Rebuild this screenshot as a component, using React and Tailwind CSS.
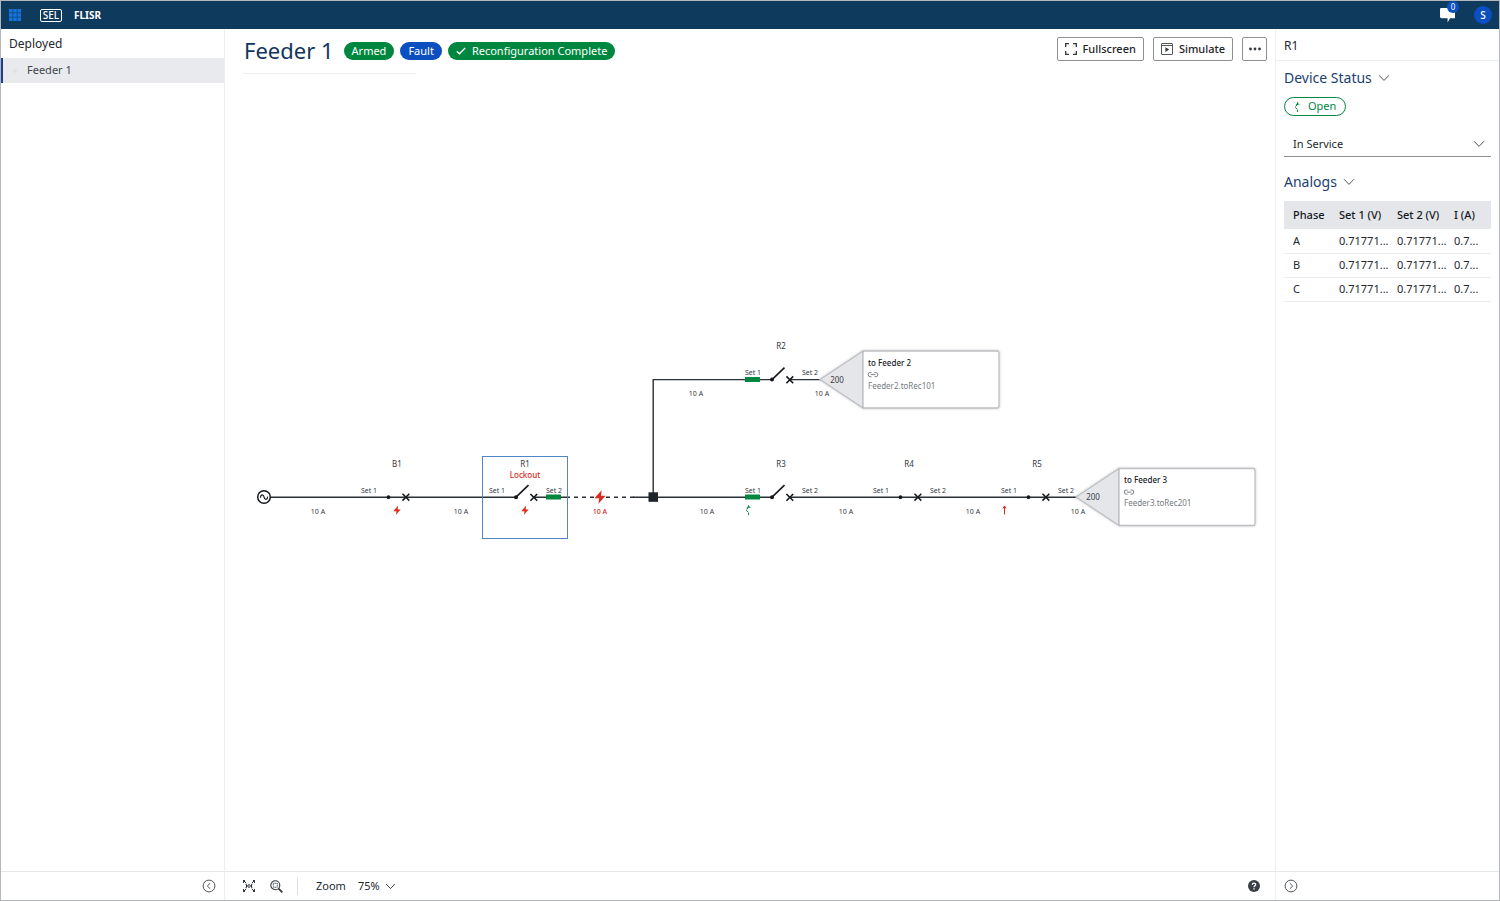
import React from "react";

const AMPS = [
  { x: 318, y: 514 },
  { x: 461, y: 514 },
  { x: 600, y: 514, alert: true },
  { x: 707, y: 514 },
  { x: 846, y: 514 },
  { x: 973, y: 514 },
  { x: 1078, y: 514 },
  { x: 696, y: 396 },
  { x: 822, y: 396 },
];

const SETS = [
  { x: 369, y: 493, n: 1 },
  { x: 497, y: 493, n: 1 },
  { x: 554, y: 493, n: 2 },
  { x: 753, y: 493, n: 1 },
  { x: 810, y: 493, n: 2 },
  { x: 881, y: 493, n: 1 },
  { x: 938, y: 493, n: 2 },
  { x: 1009, y: 493, n: 1 },
  { x: 1066, y: 493, n: 2 },
  { x: 753, y: 375, n: 1 },
  { x: 810, y: 375, n: 2 },
];

const DEVICES = [
  { x: 397, y: 467, name: "B1" },
  { x: 525, y: 467, name: "R1" },
  { x: 781, y: 467, name: "R3" },
  { x: 909, y: 467, name: "R4" },
  { x: 1037, y: 467, name: "R5" },
  { x: 781, y: 349, name: "R2" },
];

function Chevron({ className }) {
  return (
    <svg viewBox="0 0 12 8" className={className} fill="none" stroke="currentColor" aria-hidden="true">
      <path d="M1 1.2 6 6.4 11 1.2" />
    </svg>
  );
}

function Bolt({ x, y, size }) {
  return (
    <path
      transform={`translate(${x} ${y}) scale(${size / 10})`}
      d="M1.3-5.6-4.6 1.1H-.7L-1.3 5.6 4.6-1.1H.9Z"
      fill="#dc2a1c"
    />
  );
}

function Closed({ x, y }) {
  return (
    <g stroke="#15191d" strokeWidth="1.5">
      <circle cx={x} cy={y} r="1.9" fill="#15191d" stroke="none" />
      <path d={`M${x + 14} ${y - 3.4}l6.800 6.800m0-6.800l-6.800 6.800`} />
    </g>
  );
}

function Open({ x, y }) {
  return (
    <g stroke="#15191d" strokeWidth="1.6" fill="none">
      <circle cx={x} cy={y} r="2" fill="#15191d" stroke="none" />
      <path d={`M${x} ${y}l12.500-12`} />
      <path d={`M${x + 14.4} ${y - 3.2}l6.800 6.800m0-6.800l-6.800 6.800`} />
    </g>
  );
}

function WalkMark({ x, y }) {
  return (
    <g transform={`translate(${x} ${y})`} fill="none" stroke="#00873f" strokeWidth="1">
      <path d="M.6-4.800V-2.200M-1.200-2.200 .6-3.400 2.400-2.400M.4-2.600-1.400-.4M-1.800.2.4 2.400M.6 2.800V5" />
    </g>
  );
}

function FeederLink({ x, y, title, target }) {
  return (
    <g>
      <g filter="url(#soft)">
        <path d={`M${x} ${y}L${x + 43} ${y - 28.5}V${y + 28.5}Z`} fill="#e4e6ea" stroke="#bdbfc2" strokeWidth="1.3" />
        <rect x={x + 43} y={y - 28.5} width="136" height="57" rx="2" fill="#fff" stroke="#bdbfc2" strokeWidth="1.3" />
      </g>
      <text x={x + 17} y={y + 3} fontSize="8" textAnchor="middle" fill="#3b4046">200</text>
      <text x={x + 48} y={y - 14} fontSize="8" fontWeight="500" fill="#15191d">{title}</text>
      <path
        d={`M${x + 51.5} ${y - 7}h-1.200a2.100 2.100 0 0 0 0 4.200h1.200M${x + 54.5} ${y - 7}h1.200a2.100 2.100 0 0 1 0 4.200h-1.200M${x + 50.8} ${y - 4.9}h4.600`}
        fill="none"
        stroke="#6b7177"
        strokeWidth="0.9"
      />
      <text x={x + 48} y={y + 9} fontSize="8" fill="#757b82">{target}</text>
    </g>
  );
}

function Diagram() {
  return (
    <svg viewBox="225 320 1050 241" className="h-[241px] w-[1050px] shrink-0" role="img" aria-label="Feeder 1 one-line diagram">
      <defs>
        <filter id="soft" x="-5%" y="-10%" width="110%" height="120%">
          <feDropShadow dx="0" dy="0" stdDeviation="1" floodColor="#000" floodOpacity="0.25" />
        </filter>
      </defs>

      <g fill="none" stroke="#2a2f35" strokeWidth="1.4">
        <path d="M271 497.2H516M534 497.2H570" />
        <path d="M574 497.2H634" strokeDasharray="4 4" strokeWidth="1.6" />
        <path d="M633 497.2H772M790 497.2H1077" />
        <path d="M653.2 497V379.6H772M790 379.6H821" />
      </g>

      <circle cx="264" cy="497" r="6.3" fill="#fff" stroke="#15191d" strokeWidth="1.5" />
      <path d="M260.4 497.6c.4-3.6 3-3.6 3.7-.4s3.2 3 3.6-.6" fill="none" stroke="#15191d" strokeWidth="1.2" />
      <rect x="648.5" y="492.3" width="9.5" height="9.5" fill="#1d2329" />

      <rect x="482.5" y="456.5" width="85" height="82" fill="none" stroke="#4f86c6" />

      <g fill="#00873f">
        <rect x="546" y="494.6" width="15" height="5" rx=".5" />
        <rect x="745" y="494.6" width="15" height="5" rx=".5" />
        <rect x="745" y="377" width="15" height="5" rx=".5" />
      </g>

      <Closed x={388.5} y={497.2} />
      <Closed x={900.5} y={497.2} />
      <Closed x={1028.5} y={497.2} />
      <Open x={516} y={497.2} />
      <Open x={772} y={497.2} />
      <Open x={772} y={379.6} />

      <Bolt x={397} y={510.3} size={8} />
      <Bolt x={525} y={510.3} size={8} />
      <Bolt x={600} y={497} size={12} />
      <WalkMark x={748} y={510} />
      <path d="M1004.5 514.5v-8M1002.900 508.400l1.600-2.400 1.600 2.400" fill="none" stroke="#dc2a1c" />

      <FeederLink x={820} y={379.5} title="to Feeder 2" target="Feeder2.toRec101" />
      <FeederLink x={1076} y={497} title="to Feeder 3" target="Feeder3.toRec201" />

      <g fontSize="7" textAnchor="middle" fill="#33383d">
        {AMPS.map((a) => (
          <text key={`${a.x}-${a.y}`} x={a.x} y={a.y} fill={a.alert ? "#dc2a1c" : undefined} fontWeight={a.alert ? 500 : 400}>
            10 A
          </text>
        ))}
        {SETS.map((s) => (
          <text key={`${s.x}-${s.y}`} x={s.x} y={s.y}>{`Set ${s.n}`}</text>
        ))}
      </g>
      <g fontSize="8" textAnchor="middle" fill="#33383d">
        {DEVICES.map((d) => (
          <text key={d.name} x={d.x} y={d.y}>{d.name}</text>
        ))}
        <text x="525" y="478" fill="#dc2a1c" fontWeight="500">Lockout</text>
      </g>
    </svg>
  );
}

function Header() {
  return (
    <header className="flex h-7 shrink-0 items-center bg-[#0e3a5d] text-white">
      <button aria-label="Applications" className="ml-2 w-3">
        <svg viewBox="0 0 12 12" className="size-3 fill-[#1673e0]" aria-hidden="true">
          {[0, 4.2, 8.4].map((y) => [0, 4.2, 8.4].map((x) => <rect key={`${x}-${y}`} x={x} y={y} width="3.6" height="3.6" />))}
        </svg>
      </button>
      <span className="ml-[19px] flex h-[13px] w-[22px] items-center justify-center rounded-[2px] border border-white text-[10px] leading-none font-medium">
        SEL
      </span>
      <span className="ml-3 text-[10px] leading-none font-bold">FLISR</span>
      <button aria-label="Notifications" className="relative mr-[18px] ml-auto size-4">
        <svg viewBox="0 0 16 16" className="size-4 fill-white" aria-hidden="true">
          <path d="M1.4 1H15v10.2H10L7.6 15.4V11.200H1.400A1.400 1.400 0 0 1 0 9.800V2.400A1.400 1.400 0 0 1 1.400 1Z" />
        </svg>
        <span className="absolute -top-1.5 left-[7px] flex size-3 items-center justify-center rounded-full bg-[#0b4fc0] text-[8px] leading-none">0</span>
      </button>
      <button className="mr-[7px] flex size-[18px] items-center justify-center rounded-full bg-[#0b4fc0] text-[10px] leading-none font-medium">
        S
      </button>
    </header>
  );
}

function LeftPanel() {
  return (
    <aside className="flex w-56 shrink-0 flex-col border-r border-[#eceef0]">
      <h2 className="flex h-[29px] items-center pl-2 text-[12px] text-[#22282e]">Deployed</h2>
      <a href="#feeder-1" className="flex h-[25px] items-center border-l-2 border-[#1d3f8a] bg-[#e9eaee] text-[11px] text-[#40464c]">
        <span className="ml-2.5 size-1 rounded-full bg-[#e0e2e5]" />
        <span className="ml-2.5">Feeder 1</span>
      </a>
      <div className="mt-auto flex h-[29px] items-center justify-end border-t border-[#e6e8ea] pr-2">
        <button aria-label="Collapse left panel">
          <svg viewBox="0 0 14 14" className="size-3.5" fill="none" stroke="#50565c" strokeWidth="1" aria-hidden="true">
            <circle cx="7" cy="7" r="5.900" />
            <path d="M8.200 4.200 5.300 7l2.900 2.800" />
          </svg>
        </button>
      </div>
    </aside>
  );
}

function Toolbar() {
  const button = "flex h-6 items-center rounded-[2px] border border-[#8d9196] text-[11px] font-medium text-[#1d2329]";
  const badge = "flex h-[18px] items-center rounded-full px-2";
  return (
    <div className="shrink-0 pr-2 pl-[18px]">
      <div className="flex h-11 items-start">
        <h1 className="pl-px text-[22px] leading-[42px] whitespace-nowrap text-[#12355b]">Feeder 1</h1>
        <div className="ml-2.5 flex h-11 items-center gap-1.5 text-[11px] whitespace-nowrap text-white">
          <span className={`${badge} bg-[#00873f]`}>Armed</span>
          <span className={`${badge} bg-[#0b4fc0]`}>Fault</span>
          <span className={`${badge} gap-1.5 bg-[#00873f]`}>
            <svg viewBox="0 0 10 8" className="h-2 w-2.5" fill="none" stroke="#fff" strokeWidth="1.300" aria-hidden="true">
              <path d="M.8 4.200 3.400 6.800 9.200 1" />
            </svg>
            Reconfiguration Complete
          </span>
        </div>
        <div className="mt-2 ml-auto flex gap-[9px]">
          <button className={`${button} gap-1.5 px-[7px]`}>
            <svg viewBox="0 0 12 12" className="size-3" fill="none" stroke="#33383d" strokeWidth="1.300" aria-hidden="true">
              <path d="M.7 4V.7H4M8 .7h3.300V4M11.300 8v3.300H8M4 11.300H.7V8" />
            </svg>
            Fullscreen
          </button>
          <button className={`${button} gap-1.5 px-[7px]`}>
            <svg viewBox="0 0 12 12" className="size-3" fill="none" stroke="#50565c" aria-hidden="true">
              <rect x=".5" y=".5" width="11" height="11" rx=".5" />
              <path d="M.5 2.500h11" />
              <path d="M4.400 4.200v4.800L8.200 6.600Z" fill="#33383d" stroke="none" />
            </svg>
            Simulate
          </button>
          <button aria-label="More actions" className={`${button} w-[25px] justify-center`}>
            <svg viewBox="0 0 12 4" className="h-1 w-3" fill="#33383d" aria-hidden="true">
              <circle cx="1.500" cy="2" r="1.400" />
              <circle cx="6" cy="2" r="1.400" />
              <circle cx="10.500" cy="2" r="1.400" />
            </svg>
          </button>
        </div>
      </div>
      <div className="h-px w-[173px] bg-[#eceef0]" />
    </div>
  );
}

function CanvasFooter() {
  return (
    <div className="flex h-[29px] shrink-0 items-center border-t border-[#e6e8ea] pr-[15px] pl-[18px] text-[11px] text-[#22282e]">
      <button aria-label="Fit to view">
        <svg viewBox="0 0 12 12" className="size-3" fill="none" stroke="#1d2329" aria-hidden="true">
          <path d="M.4.4 3.200 3M11.600.4 8.800 3M.4 11.600 3.200 9M11.600 11.600 8.800 9" />
          <path d="M.5 3V.5H2M10 .5h1.500V3M.5 9v2.500H2M10 11.500h1.500V9" strokeWidth=".9" />
          <path d="M3 3.800Q4.300 6 3 8.200M9 3.800Q7.700 6 9 8.200" />
          <circle cx="6" cy="6" r="1.300" strokeWidth=".9" />
        </svg>
      </button>
      <button aria-label="Zoom to area" className="ml-[15px]">
        <svg viewBox="0 0 13 13" className="size-[13px]" fill="none" stroke="#33383d" aria-hidden="true">
          <circle cx="5.300" cy="5.300" r="4.500" strokeWidth="1.100" />
          <path d="m8.600 8.600 3.700 3.700" strokeWidth="1.800" />
          <rect x="3.300" y="3.300" width="4" height="4" strokeWidth=".9" strokeDasharray="1.200 .6" />
        </svg>
      </button>
      <span className="ml-3.5 h-[18px] w-px bg-[#dfe1e4]" />
      <label htmlFor="zoom" className="ml-[18px]">Zoom</label>
      <span className="ml-3 grid items-center">
        <select id="zoom" defaultValue="75%" className="col-start-1 row-start-1 w-[38px] appearance-none">
          <option>50%</option>
          <option>75%</option>
          <option>100%</option>
        </select>
        <Chevron className="pointer-events-none col-start-1 row-start-1 h-[7px] w-[11px] justify-self-end" />
      </span>
      <button aria-label="Help" className="ml-auto">
        <svg viewBox="0 0 12 12" className="size-3" aria-hidden="true">
          <circle cx="6" cy="6" r="6" fill="#3b4046" />
          <path d="M4.300 4.700C4.300 2.600 7.700 2.600 7.700 4.600 7.700 5.800 6 5.800 6 7.200M6 8.200V9.500" fill="none" stroke="#fff" strokeWidth="1.300" />
        </svg>
      </button>
    </div>
  );
}

function RightPanel() {
  return (
    <aside className="flex w-56 shrink-0 flex-col border-l border-[#eceef0] text-[#22282e]">
      <h2 className="flex h-8 items-center border-b border-[#e9ebed] pt-0.5 pl-2 text-[12px]">R1</h2>
      <div className="flex flex-col px-2">
        <button className="mt-1.5 flex h-[22px] items-center gap-1.5 text-[14px] leading-none text-[#1b3f73]">
          Device Status
          <Chevron className="h-2 w-3 text-[#50565c]" />
        </button>
        <div className="mt-2 flex">
          <span className="flex h-[19px] w-[62px] items-center gap-1.5 rounded-full border border-[#00873f] pl-[7px] text-[11px] text-[#00873f]">
            <svg viewBox="-5 -6 10 12" className="h-3 w-2.5 shrink-0" aria-hidden="true">
              <WalkMark x={0} y={0} />
            </svg>
            Open
          </span>
        </div>
        <div className="mt-4 grid h-[25px] items-center border-b border-[#8d9196]">
          <select aria-label="Service state" defaultValue="In Service" className="col-start-1 row-start-1 w-full appearance-none pl-[9px] text-[11px]">
            <option>In Service</option>
            <option>Out of Service</option>
          </select>
          <Chevron className="pointer-events-none col-start-1 row-start-1 mr-1.5 h-2 w-3 justify-self-end text-[#50565c]" />
        </div>
        <button className="mt-3.5 flex h-[22px] items-center gap-1.5 text-[14px] leading-none text-[#1b3f73]">
          Analogs
          <Chevron className="h-2 w-3 text-[#50565c]" />
        </button>
        <table className="mt-2 w-full table-fixed text-left text-[11px]">
          <thead>
            <tr className="h-7 bg-[#e4e6ea] text-[#15191d]">
              <th className="w-[55px] pl-[9px] font-medium">Phase</th>
              <th className="w-[58px] font-medium">Set 1 (V)</th>
              <th className="w-[57px] font-medium">Set 2 (V)</th>
              <th className="font-medium">I (A)</th>
            </tr>
          </thead>
          <tbody>
            {["A", "B", "C"].map((phase) => (
              <tr key={phase} className="h-[24px] border-b border-[#e9ebed]">
                <td className="pl-[9px]">{phase}</td>
                <td>0.71771...</td>
                <td>0.71771...</td>
                <td>0.7...</td>
              </tr>
            ))}
          </tbody>
        </table>
      </div>
      <div className="mt-auto flex h-[29px] items-center border-t border-[#e6e8ea] pl-2">
        <button aria-label="Collapse right panel">
          <svg viewBox="0 0 14 14" className="size-3.5" fill="none" stroke="#50565c" strokeWidth="1" aria-hidden="true">
            <circle cx="7" cy="7" r="5.900" />
            <path d="M5.800 4.200 8.700 7 5.800 9.800" />
          </svg>
        </button>
      </div>
    </aside>
  );
}

export default function App() {
  return (
    <div className="flex min-h-screen flex-col border border-[#b3b7bb] bg-white font-['Noto_Sans',sans-serif]">
      <Header />
      <div className="flex grow">
        <LeftPanel />
        <main className="flex min-w-0 grow flex-col">
          <Toolbar />
          <div className="flex grow items-center justify-center overflow-hidden pb-16">
            <Diagram />
          </div>
          <CanvasFooter />
        </main>
        <RightPanel />
      </div>
    </div>
  );
}
